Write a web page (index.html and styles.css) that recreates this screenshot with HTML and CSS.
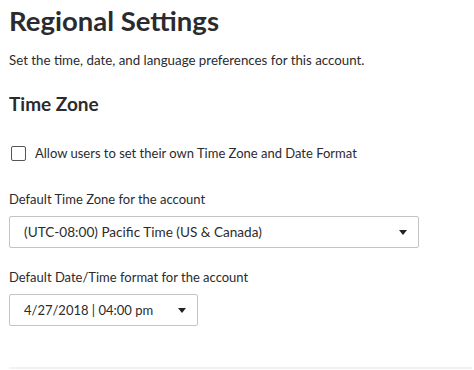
FILE: index.html
```html
<!DOCTYPE html>
<html lang="en">
<head>
    <meta charset="UTF-8">
    <meta name="viewport" content="width=device-width, initial-scale=1.0">
    <title>Regional Settings</title>
    <link rel="stylesheet" href="styles.css">
</head>
<body>
    <div class="page">
        <h1>Regional Settings</h1>
        <p class="intro">Set the time, date, and language preferences for this account.</p>
        <h2>Time Zone</h2>
        <label class="check-row">
            <span class="checkbox"></span>
            <span>Allow users to set their own Time Zone and Date Format</span>
        </label>
        <div class="field">
            <div class="field-label">Default Time Zone for the account</div>
            <div class="select wide">
                <span>(UTC-08:00) Pacific Time (US &amp; Canada)</span>
                <span class="caret"></span>
            </div>
        </div>
        <div class="field">
            <div class="field-label">Default Date/Time format for the account</div>
            <div class="select narrow">
                <span>4/27/2018 | 04:00 pm</span>
                <span class="caret"></span>
            </div>
        </div>
        <div class="divider"></div>
    </div>
</body>
</html>
```

FILE: styles.css
```css
body {
    margin: 0;
    background: #fff;
    font-family: Lato, "Liberation Sans", sans-serif;
    color: #2b2b2e;
}
.page {
    padding: 5px 2px 0 9px;
}
h1 {
    margin: 0;
    font-size: 27.5px;
    font-weight: 700;
    line-height: 32px;
}
.intro {
    margin: 15px 0 0;
    font-size: 13.3px;
    line-height: 16px;
}
h2 {
    margin: 24px 0 0;
    font-size: 19px;
    font-weight: 700;
    line-height: 24px;
}
.check-row {
    display: flex;
    align-items: center;
    gap: 9px;
    margin: 29px 0 0 2px;
    font-size: 13px;
    line-height: 16px;
}
.checkbox {
    width: 13px;
    height: 13px;
    border: 1.5px solid #555;
    border-radius: 2px;
}
.field {
    margin-top: 30px;
}
.field + .field {
    margin-top: 21px;
}
.field-label {
    font-size: 13px;
    line-height: 16px;
}
.select {
    display: flex;
    align-items: center;
    justify-content: space-between;
    box-sizing: border-box;
    height: 32px;
    margin-top: 9px;
    padding: 0 11px 0 14px;
    border: 1px solid #c4c4c4;
    border-radius: 2px;
    font-size: 13px;
}
.wide {
    width: 410px;
    font-size: 13.6px;
}
.narrow {
    width: 189px;
}
.caret {
    width: 0;
    height: 0;
    border-left: 4px solid transparent;
    border-right: 4px solid transparent;
    border-top: 5px solid #222;
}
.divider {
    height: 2px;
    margin-top: 41px;
    background: #f2f2f2;
}
```
